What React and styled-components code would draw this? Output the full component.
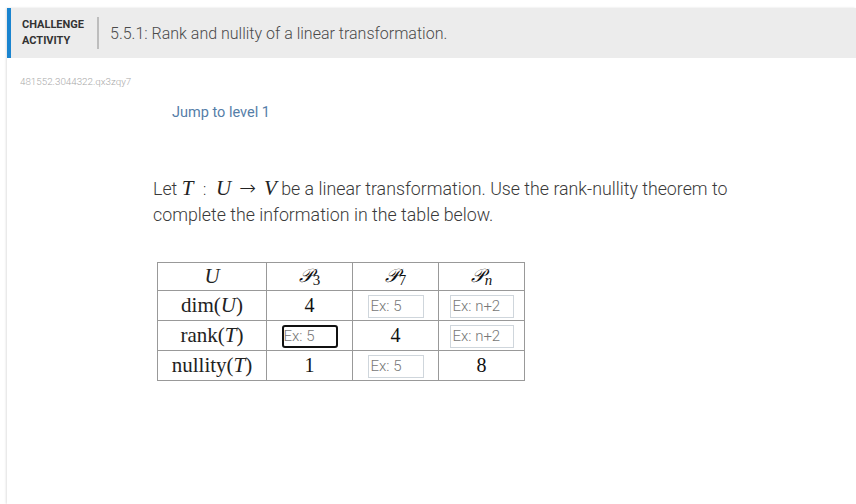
import React from 'react';
import styled, { createGlobalStyle } from 'styled-components';

const GlobalStyle = createGlobalStyle`
  body {
    margin: 0;
    background: #fff;
    font-family: Roboto, "Liberation Sans", sans-serif;
  }
`;

const Card = styled.div`
  margin: 8px 0 0 7px;
  min-height: 496px;
  background: #fff;
  box-shadow: -1px 0 2px rgba(0, 0, 0, 0.12);
`;

const Header = styled.div`
  display: flex;
  align-items: center;
  height: 50px;
  background: #ececec;
  border-left: 4px solid #1a84cf;
  padding-left: 11px;
`;

const Label = styled.div`
  font-size: 11px;
  font-weight: 700;
  line-height: 16px;
  color: #333;
  width: 75px;
`;

const Divider = styled.div`
  width: 2px;
  height: 32px;
  background: #bdbdbd;
  margin: 0 11px 0 0;
`;

const Title = styled.div`
  font-size: 16px;
  font-weight: 300;
  color: #4a4a4a;
`;

const Body = styled.div`
  padding: 18px 0 0 13px;
`;

const Code = styled.div`
  font-size: 9.8px;
  color: #aaa;
  font-weight: 300;
`;

const JumpLink = styled.a`
  display: block;
  margin: 17px 0 0 152px;
  font-size: 14.5px;
  color: #557ea8;
  text-decoration: none;
`;

const Prompt = styled.p`
  margin: 54px 0 0 133px;
  font-size: 17.8px;
  font-weight: 300;
  line-height: 26px;
  color: #3a3a3a;
  width: 610px;
`;

const M = styled.span`
  font-family: "Liberation Serif", "DejaVu Serif", serif;
  font-size: 21px;
  font-style: ${(p) => (p.$upright ? 'normal' : 'italic')};
  font-weight: 400;
  color: #222;
`;

const Rel = styled.span`
  font-family: "DejaVu Sans", "Liberation Serif", serif;
  font-size: 20px;
  margin: 0 8px;
  color: #222;
`;

const Table = styled.table`
  margin: 34px 0 0 137px;
  border-collapse: collapse;
  font-family: "Liberation Serif", "DejaVu Serif", serif;
  font-size: 20px;
  color: #111;
`;

const Cell = styled.td`
  border: 1px solid #999;
  height: ${(p) => (p.$head ? '27px' : '29px')};
  width: ${(p) => (p.$first ? '108px' : '85px')};
  padding: 0;
  text-align: center;
  vertical-align: middle;
`;

const Script = styled.span`
  font-family: "DejaVu Serif", "DejaVu Sans", serif;
  font-style: italic;
  font-size: 19px;
  sub {
    font-family: "Liberation Serif", serif;
    font-style: normal;
    font-size: 15px;
    vertical-align: -3px;
  }
`;

const Input = styled.input`
  box-sizing: border-box;
  width: ${(p) => (p.$wide ? '64px' : '56px')};
  height: 23px;
  border-style: solid;
  border-color: ${(p) => (p.$focus ? '#111' : '#cfd6dc')};
  border-width: ${(p) => (p.$focus ? '2px' : '1px')};
  border-radius: ${(p) => (p.$focus ? '3px' : '0')};
  padding: 0 ${(p) => (p.$focus ? '0' : '2px')};
  font-family: Roboto, "Liberation Sans", sans-serif;
  font-weight: 300;
  font-size: 15px;
  vertical-align: middle;
  outline: none;
  &::placeholder {
    color: #777;
  }
`;

const P = ({ sub }) => (
  <Script>
    𝒫<sub>{sub}</sub>
  </Script>
);

const rows = [
  [<><M $upright>dim(</M><M>U</M><M $upright>)</M></>, '4', 'in', 'inw'],
  [<><M $upright>rank(</M><M>T</M><M $upright>)</M></>, 'focus', '4', 'inw'],
  [<><M $upright>nullity(</M><M>T</M><M $upright>)</M></>, '1', 'in', '8'],
];

const renderValue = (v) => {
  if (v === 'in') return <Input placeholder="Ex: 5" />;
  if (v === 'inw') return <Input $wide placeholder="Ex: n+2" />;
  if (v === 'focus') return <Input $focus placeholder="Ex: 5" />;
  return v;
};

export default function App() {
  return (
    <>
      <GlobalStyle />
      <Card>
        <Header>
          <Label>
            CHALLENGE
            <br />
            ACTIVITY
          </Label>
          <Divider />
          <Title>5.5.1: Rank and nullity of a linear transformation.</Title>
        </Header>
        <Body>
          <Code>481552.3044322.qx3zqy7</Code>
          <JumpLink href="#">Jump to level 1</JumpLink>
          <Prompt>
            Let <M>T</M>
            <Rel>:</Rel>
            <M>U</M>
            <Rel>→</Rel>
            <M>V</M> be a linear transformation. Use the rank-nullity theorem to complete the
            information in the table below.
          </Prompt>
          <Table>
            <tbody>
              <tr>
                <Cell $head $first>
                  <M>U</M>
                </Cell>
                <Cell $head>
                  <P sub="3" />
                </Cell>
                <Cell $head>
                  <P sub="7" />
                </Cell>
                <Cell $head>
                  <P sub={<i>n</i>} />
                </Cell>
              </tr>
              {rows.map((r, i) => (
                <tr key={i}>
                  <Cell $first>{r[0]}</Cell>
                  <Cell>{renderValue(r[1])}</Cell>
                  <Cell>{renderValue(r[2])}</Cell>
                  <Cell>{renderValue(r[3])}</Cell>
                </tr>
              ))}
            </tbody>
          </Table>
        </Body>
      </Card>
    </>
  );
}
